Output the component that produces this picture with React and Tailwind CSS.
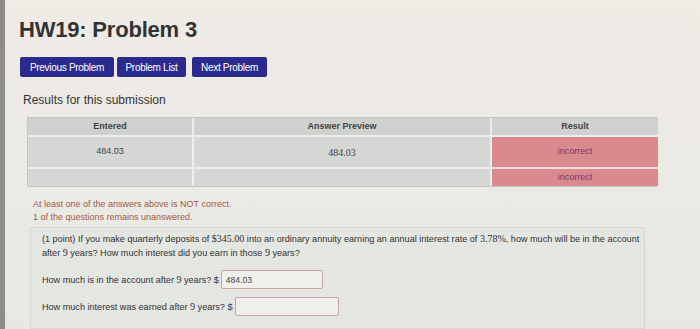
import React from "react";

const S = { fontFamily: '"Liberation Sans", Arial, sans-serif' };
const M = { fontFamily: '"Liberation Serif", "Times New Roman", serif' };

export default function App() {
  return (
    <div className="w-[700px] h-[329px] overflow-hidden flex bg-[#e8e8e3]" style={S}>
      <div className="w-[5px] shrink-0 bg-[#8c8c8a]" />
      <div className="flex-1 flex flex-col bg-gradient-to-b from-[#efebe5] via-[#eceae5] to-[#e6e8e2]">
        <h1 className="ml-[14px] mt-[17px] text-[22px] leading-[26px] font-bold text-[#333] tracking-[-0.2px]">
          HW19: Problem 3
        </h1>
        <div className="ml-[15px] mt-[14px] flex gap-[3px]">
          <button className="h-[20px] w-[94px] rounded-[2px] bg-[#2b2b8f] text-white text-[10px] tracking-[-0.3px]">Previous Problem</button>
          <button className="h-[20px] w-[69px] rounded-[2px] bg-[#2b2b8f] text-white text-[10px] tracking-[-0.3px]">Problem List</button>
          <button className="ml-[3px] h-[20px] w-[75px] rounded-[2px] bg-[#2b2b8f] text-white text-[10px] tracking-[-0.3px]">Next Problem</button>
        </div>
        <div className="ml-[18px] mt-[16px] text-[12px] leading-[14px] text-[#333]">Results for this submission</div>
        <div className="ml-[22px] mt-[10px] w-[630px] border border-[#c4c6c3] bg-[#eef0ed]">
          <div className="grid grid-cols-[166px_298px_166px] text-[9px] text-[#444]">
            <div className="h-[19px] flex items-center justify-center bg-[#cfd1ce] border-r-2 border-b-2 border-[#eceeeb] font-bold">Entered</div>
            <div className="h-[19px] flex items-center justify-center bg-[#cfd1ce] border-r-2 border-b-2 border-[#eceeeb] font-bold">Answer Preview</div>
            <div className="h-[19px] flex items-center justify-center bg-[#cfd1ce] border-b-2 border-[#eceeeb] font-bold">Result</div>
            <div className="h-[32px] flex items-center justify-center bg-[#d5d7d4] border-r-2 border-b-2 border-[#eceeeb]">484.03</div>
            <div className="h-[32px] flex items-center justify-center bg-[#d5d7d4] border-r-2 border-b-2 border-[#eceeeb]" style={M}><span className="text-[10px]">484.03</span></div>
            <div className="h-[32px] flex items-center justify-center bg-[#d88a8c] border-b-2 border-[#f0dcdc] text-[#7e3477]">incorrect</div>
            <div className="h-[17px] bg-[#d5d7d4] border-r-2 border-[#eceeeb]" />
            <div className="h-[17px] bg-[#d5d7d4] border-r-2 border-[#eceeeb]" />
            <div className="h-[17px] flex items-center justify-center bg-[#d88a8c] text-[#7e3477]">incorrect</div>
          </div>
        </div>
        <div className="ml-[28px] mt-[11px] text-[9px] leading-[13px] text-[#a05a48]">
          <div>At least one of the answers above is NOT correct.</div>
          <div>1 of the questions remains unanswered.</div>
        </div>
        <div className="ml-[25px] mt-[3px] w-[615px] flex-1 border border-[#d6d8d3] bg-[#e4e6e1] pl-[11px] pt-[4px] text-[9.1px] leading-[14px] text-[#333]">
          <div className="whitespace-nowrap">
            (1 point) If you make quarterly deposits of <span style={M} className="text-[10px]">$345.00</span> into an ordinary annuity earning an annual interest rate of <span style={M} className="text-[10px]">3.78%</span>, how much will be in the account
          </div>
          <div className="whitespace-nowrap">
            after <span style={M} className="text-[10px]">9</span> years? How much interest did you earn in those <span style={M} className="text-[10px]">9</span> years?
          </div>
          <div className="mt-[10px] flex items-center">
            <span>How much is in the account after <span style={M} className="text-[10px]">9</span> years? $</span>
            <div className="ml-[2px] w-[102px] h-[19px] rounded-[2px] border border-[#c9a49c] bg-[#f1efeb] flex items-center pl-[4px] text-[8.5px] text-[#444]">484.03</div>
          </div>
          <div className="mt-[8px] flex items-center">
            <span>How much interest was earned after <span style={M} className="text-[10px]">9</span> years? $</span>
            <div className="ml-[2px] w-[104px] h-[19px] rounded-[2px] border border-[#c9a49c] bg-[#f1efeb]" />
          </div>
        </div>
      </div>
    </div>
  );
}
